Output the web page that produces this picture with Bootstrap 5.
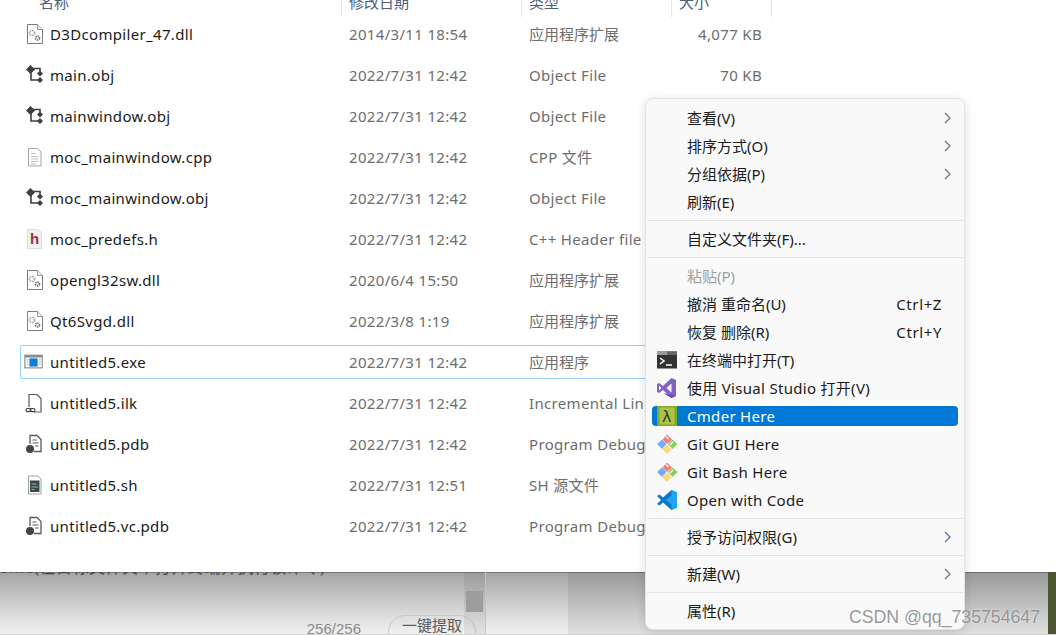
<!DOCTYPE html>
<html lang="zh-CN">
<head>
  <meta charset="UTF-8" />
  <meta name="viewport" content="width=device-width, initial-scale=1" />
  <title>File Explorer</title>
  <link href="https://cdn.jsdelivr.net/npm/bootstrap@5.3.3/dist/css/bootstrap.min.css" rel="stylesheet" />
  <style>
    html, body { height: 635px; overflow: hidden; }
    body { font-family: "Noto Sans", "Noto Sans CJK SC", sans-serif; font-size: 15px; position: relative; background: #fff; }

    .explorer { height: 572px; background: #fff; overflow: hidden; }
    .fgrid { display: grid; grid-template-columns: 322px 180px 150px 100px; margin-left: 20px; width: 752px; }
    .fhead { height: 17px; color: #4c607a; }
    .fhead > div { margin-top: -7px; padding: 0 0 0 7px; height: 24px; line-height: 18px; border-right: 1px solid #e5e5e5; }
    .fhead > div:first-child { padding-left: 19px; }
    .frow { height: 34px; margin-bottom: 7px; align-items: center; color: #6d6d6d; border: 1px solid transparent; border-radius: 2px; letter-spacing: .33px; }
    .frow > div { padding-left: 6px; white-space: nowrap; }
    .frow.picked { border-color: #99d1ff; }
    .frow > .zh { letter-spacing: 0; }
    .fname { display: flex; align-items: center; color: #1a1a1a; padding-left: 3px !important; }
    .fname svg { width: 20px; height: 22px; margin-right: 6px; flex: none; }
    .ftype { overflow: hidden; max-width: 122px; }
    .fsize { text-align: right; padding-right: 11px; }

    .backdrop { height: 63px; display: flex; color: #5a5a5a; background: linear-gradient(#a4a4a4, #dcdcdc 70%, #f1f1f1); border-bottom: 1px solid #d4d4d4; overflow: hidden; box-shadow: inset 0 1px 0 #777; }
    .bpane { width: 464px; flex: none; }
    .clipline { margin-top: -15px; font-size: 16px; line-height: 20px; white-space: nowrap; margin-left: -1px; color: #444; letter-spacing: .5px; }
    .bfoot { margin-top: 38px; justify-content: flex-end; gap: 27px; margin-right: -12px; }
    .counter { font-family: "Liberation Sans", sans-serif; font-size: 15px; color: #8a8a8a; padding-top: 3px; }
    .pillbtn { width: 88px; height: 34px; border: 1px solid #c8c8c8; border-radius: 17px; background: transparent; font-size: 15px; color: #5a5a5a; text-align: center; line-height: 19px; }
    .sbar { width: 22px; flex: none; background: rgba(0,0,0,.06); border-right: 1px solid #c4c4c4; padding: 19px 2px 0 2px; }
    .sthumb { width: 17px; height: 21px; background: #9d9d9d; }
    .bgap { width: 82px; flex: none; }
    .bside { flex: 1; background: rgba(0,0,0,.07); }
    .bphoto { width: 8px; flex: none; background: #4c5632; }

    .ctx.show { position: absolute; display: flex; flex-direction: column; left: 645px; top: 98px; width: 320px; height: 532px; margin: 0; padding: 5px 0 0; min-width: 0; background: #f9f9f9; border: 1px solid #e3e3e3; border-radius: 8px; font-size: 15px; color: #1a1a1a; box-shadow: 0 2px 10px rgba(0,0,0,.14); }
    .ctx .dropdown-item { display: flex; align-items: center; position: relative; height: 20px; margin: 4px 6px; width: auto; padding: 0 16px 0 35px; border-radius: 4px; color: #1a1a1a; line-height: 20px; white-space: nowrap; font-size: 15px; flex: none; }
    .ctx .dropdown-item.active { background: #0078d4; color: #fff; }
    .ctx .dropdown-item.disabled { color: #a0a0a0; }
    .ctx .dropdown-divider { margin: 4px 1px; border-top: 1px solid #e3e3e3; opacity: 1; flex: none; }
    .ctx .dropdown-item.latin { letter-spacing: .3px; }
    .mico { position: absolute; left: 4px; top: -1px; width: 22px; height: 22px; }
    .keyhint { margin-left: auto; letter-spacing: .6px; }
    .chev { margin-left: auto; margin-right: -9px; width: 7px; height: 12px; fill: none; stroke: #6b6b6b; stroke-width: 1.1; }
    .chev.tint { stroke: #3d6fb4; }

    .wmark { position: absolute; z-index: 1010; left: 849px; top: 604px; font-family: "Liberation Sans", sans-serif; font-size: 17.7px; color: rgba(125,125,125,.8); text-shadow: 0 0 2px rgba(255,255,255,.8); white-space: nowrap; }
  </style>
</head>
<body>

<svg width="0" height="0" class="position-absolute">
  <defs>
    <symbol id="i-dll" viewBox="0 0 20 22">
      <path d="M3.500 1.500h10l5 5v14h-15z" fill="#fff" stroke="#7b7b7b"/>
      <path d="M13.500 1.500v5h5" fill="#eee" stroke="#9a9a9a"/>
      <circle cx="8" cy="10" r="2.600" fill="none" stroke="#a4acb8" stroke-width="1.800" stroke-dasharray="1.600 .8"/>
      <circle cx="13.500" cy="15" r="2" fill="none" stroke="#6c6c6c" stroke-width="1.600" stroke-dasharray="1.400 .7"/>
    </symbol>
    <symbol id="i-obj" viewBox="0 0 20 22">
      <path d="M2 5.500l4.500-4.500 4.500 4.500-4.500 4.500z M13 9.500l3-3 3 3-3 3z M13 16l3-3 3 3-3 3z" fill="#3f3f3f"/>
      <path d="M8 4.500h8v3 M7 7.500v8.500h7" fill="none" stroke="#3f3f3f" stroke-width="1.600"/>
    </symbol>
    <symbol id="i-cpp" viewBox="0 0 20 22">
      <path d="M4.500 2.500h9l3.500 3.500v14h-12.500z" fill="#fff" stroke="#a2a2a2"/>
      <path d="M7 7.500h5M7 10.500h7.500M7 13h7.500M7 15.500h7.500M7 18h5" stroke="#c2c2c2"/>
    </symbol>
    <symbol id="i-h" viewBox="0 0 20 22">
      <path d="M3.500 1.500h11l3 3v16h-14z" fill="#f1f1f1" stroke="#dcdcdc"/>
      <text x="6" y="16" font-family="Liberation Sans, sans-serif" font-size="15" font-weight="700" fill="#a82a33">h</text>
    </symbol>
    <symbol id="i-exe" viewBox="0 0 22 20">
      <rect x="1" y="2.500" width="19" height="14" fill="#fff" stroke="#6f6f6f"/>
      <rect x="1" y="2.500" width="19" height="2.600" fill="#8a8a8a"/>
      <rect x="6" y="6" width="9" height="9" fill="#0f7fd6"/>
      <path d="M3 7.500h2M3 10h2M3 12.500h2M16.500 7.500h2M16.500 10h2M16.500 12.500h2" stroke="#a8a8a8"/>
    </symbol>
    <symbol id="i-ilk" viewBox="0 0 20 22">
      <path d="M5 15V2.500h8l4 4v13.500h-7" fill="#fff" stroke="#5a5a5a" stroke-width="1.200"/>
      <rect x="2" y="16.500" width="5" height="3.200" rx="1.600" fill="none" stroke="#444" stroke-width="1.200"/>
      <rect x="6" y="16.500" width="5" height="3.200" rx="1.600" fill="none" stroke="#444" stroke-width="1.200"/>
    </symbol>
    <symbol id="i-pdb" viewBox="0 0 20 22">
      <path d="M6 11V2.500h7l4 4v12h-7" fill="#fff" stroke="#5a5a5a" stroke-width="1.300"/>
      <path d="M8.500 7h4M8.500 10h6M11 13h3.500" stroke="#5a5a5a" stroke-width="1.200"/>
      <circle cx="6" cy="16" r="4" fill="#444"/>
    </symbol>
    <symbol id="i-sh" viewBox="0 0 20 22">
      <path d="M4.500 2h9.500l3 3v15h-12.500z" fill="#fff" stroke="#a0a0a0"/>
      <rect x="6" y="6.500" width="9.500" height="11.500" fill="#37474f"/>
      <path d="M7.500 10h5M7.500 13h6.500M7.500 15.500h3" stroke="#9fb0b8"/>
    </symbol>
    <symbol id="i-term" viewBox="0 0 22 22">
      <rect x="1" y="2.500" width="20" height="17" fill="#333"/>
      <rect x="1" y="2.500" width="10" height="3.500" fill="#9b9b9b"/>
      <rect x="11" y="2.500" width="10" height="3.500" fill="#666"/>
      <path d="M4 9l4 3-4 3" fill="none" stroke="#fff" stroke-width="1.500"/>
      <path d="M10 16h6" stroke="#fff" stroke-width="1.500"/>
    </symbol>
    <symbol id="i-vs" viewBox="0 0 22 22">
      <path d="M15.500 1L20 3v16l-4.500 2L7 13l-4 3-2-1V7l2-1 4 3zM15.500 6.500L10.500 11l5 4.500zM3 8.500v5l2.500-2.500z" fill="#8661c5" fill-rule="evenodd"/>
      <path d="M7 16l8.500 5L20 19z" fill="#6c46ae"/>
    </symbol>
    <symbol id="i-cmder" viewBox="0 0 22 22">
      <rect x="1" y="1" width="20" height="20" fill="#86a528"/>
      <rect x="3.500" y="2.500" width="15" height="17" fill="#a7c54a"/>
      <text x="11" y="17" text-anchor="middle" font-family="DejaVu Sans, sans-serif" font-size="16" fill="#39401d">λ</text>
    </symbol>
    <symbol id="i-git" viewBox="0 0 22 22">
      <path d="M11 1.500l5 5-5 4.500-4.500-4.500z" fill="#f08080"/>
      <path d="M6 6.500l4.500 4.500-4.500 5-5-5z" fill="#77aaf8"/>
      <path d="M16.500 6.500l5 4.500-5 5-4.500-5z" fill="#86cf5f"/>
      <path d="M11 11.500l4.500 4.500-4.500 5-5-5z" fill="#fcd975"/>
      <path d="M10 3.500l2.500 2.500M17 9l-3 3" stroke="#fff" stroke-width="1.200"/>
    </symbol>
    <symbol id="i-code" viewBox="0 0 22 22">
      <path d="M15.500 1L21 3.500v15L15.500 21 7 13.500l-3.500 3L1 15l4-4-4-4 2.500-1.500L7 8.500z" fill="#0a78c8"/>
      <path d="M15.500 1L21 3.500v15L15.500 21zM15.500 6.500L9.500 11l6 4.500z" fill="#22a5ee" fill-rule="evenodd"/>
    </symbol>
  </defs>
</svg>

<div class="explorer">
  <div class="fgrid fhead">
    <div>名称</div>
    <div>修改日期</div>
    <div>类型</div>
    <div>大小</div>
  </div>
  <div class="fgrid frow">
    <div class="fname"><svg><use href="#i-dll"/></svg>D3Dcompiler_47.dll</div>
    <div>2014/3/11 18:54</div><div class="ftype zh">应用程序扩展</div><div class="fsize">4,077 KB</div>
  </div>
  <div class="fgrid frow">
    <div class="fname"><svg><use href="#i-obj"/></svg>main.obj</div>
    <div>2022/7/31 12:42</div><div class="ftype">Object File</div><div class="fsize">70 KB</div>
  </div>
  <div class="fgrid frow">
    <div class="fname"><svg><use href="#i-obj"/></svg>mainwindow.obj</div>
    <div>2022/7/31 12:42</div><div class="ftype">Object File</div><div class="fsize"></div>
  </div>
  <div class="fgrid frow">
    <div class="fname"><svg><use href="#i-cpp"/></svg>moc_mainwindow.cpp</div>
    <div>2022/7/31 12:42</div><div class="ftype">CPP 文件</div><div class="fsize"></div>
  </div>
  <div class="fgrid frow">
    <div class="fname"><svg><use href="#i-obj"/></svg>moc_mainwindow.obj</div>
    <div>2022/7/31 12:42</div><div class="ftype">Object File</div><div class="fsize"></div>
  </div>
  <div class="fgrid frow">
    <div class="fname"><svg><use href="#i-h"/></svg>moc_predefs.h</div>
    <div>2022/7/31 12:42</div><div class="ftype">C++ Header file</div><div class="fsize"></div>
  </div>
  <div class="fgrid frow">
    <div class="fname"><svg><use href="#i-dll"/></svg>opengl32sw.dll</div>
    <div>2020/6/4 15:50</div><div class="ftype zh">应用程序扩展</div><div class="fsize"></div>
  </div>
  <div class="fgrid frow">
    <div class="fname"><svg><use href="#i-dll"/></svg>Qt6Svgd.dll</div>
    <div>2022/3/8 1:19</div><div class="ftype zh">应用程序扩展</div><div class="fsize"></div>
  </div>
  <div class="fgrid frow picked">
    <div class="fname"><svg><use href="#i-exe"/></svg>untitled5.exe</div>
    <div>2022/7/31 12:42</div><div class="ftype zh">应用程序</div><div class="fsize"></div>
  </div>
  <div class="fgrid frow">
    <div class="fname"><svg><use href="#i-ilk"/></svg>untitled5.ilk</div>
    <div>2022/7/31 12:42</div><div class="ftype">Incremental Link</div><div class="fsize"></div>
  </div>
  <div class="fgrid frow">
    <div class="fname"><svg><use href="#i-pdb"/></svg>untitled5.pdb</div>
    <div>2022/7/31 12:42</div><div class="ftype">Program Debug</div><div class="fsize"></div>
  </div>
  <div class="fgrid frow">
    <div class="fname"><svg><use href="#i-sh"/></svg>untitled5.sh</div>
    <div>2022/7/31 12:51</div><div class="ftype">SH 源文件</div><div class="fsize"></div>
  </div>
  <div class="fgrid frow">
    <div class="fname"><svg><use href="#i-pdb"/></svg>untitled5.vc.pdb</div>
    <div>2022/7/31 12:42</div><div class="ftype">Program Debug</div><div class="fsize"></div>
  </div>
</div>

<div class="backdrop">
  <div class="bpane">
    <div class="clipline">ome(在目标文件夹中打开终端并执行该命令)</div>
    <div class="bfoot d-flex">
      <span class="counter">256/256</span>
      <div class="pillbtn">一键提取</div>
    </div>
  </div>
  <div class="sbar"><div class="sthumb"></div></div>
  <div class="bgap"></div>
  <div class="bside"></div>
  <div class="bphoto"></div>
</div>

<div class="dropdown-menu show ctx">
  <a class="dropdown-item" href="#">查看(V)<svg class="chev" viewBox="0 0 7 12"><path d="M1 1l5 5-5 5"/></svg></a>
  <a class="dropdown-item" href="#">排序方式(O)<svg class="chev" viewBox="0 0 7 12"><path d="M1 1l5 5-5 5"/></svg></a>
  <a class="dropdown-item" href="#">分组依据(P)<svg class="chev" viewBox="0 0 7 12"><path d="M1 1l5 5-5 5"/></svg></a>
  <a class="dropdown-item" href="#">刷新(E)</a>
  <hr class="dropdown-divider">
  <a class="dropdown-item" href="#">自定义文件夹(F)...</a>
  <hr class="dropdown-divider">
  <a class="dropdown-item disabled" href="#">粘贴(P)</a>
  <a class="dropdown-item" href="#">撤消 重命名(U)<span class="keyhint">Ctrl+Z</span></a>
  <a class="dropdown-item" href="#">恢复 删除(R)<span class="keyhint">Ctrl+Y</span></a>
  <a class="dropdown-item" href="#"><svg class="mico"><use href="#i-term"/></svg>在终端中打开(T)</a>
  <a class="dropdown-item latin" href="#"><svg class="mico"><use href="#i-vs"/></svg>使用 Visual Studio 打开(V)</a>
  <a class="dropdown-item active latin" href="#"><svg class="mico"><use href="#i-cmder"/></svg>Cmder Here</a>
  <a class="dropdown-item latin" href="#"><svg class="mico"><use href="#i-git"/></svg>Git GUI Here</a>
  <a class="dropdown-item latin" href="#"><svg class="mico"><use href="#i-git"/></svg>Git Bash Here</a>
  <a class="dropdown-item latin" href="#"><svg class="mico"><use href="#i-code"/></svg>Open with Code</a>
  <hr class="dropdown-divider">
  <a class="dropdown-item" href="#">授予访问权限(G)<svg class="chev tint" viewBox="0 0 7 12"><path d="M1 1l5 5-5 5"/></svg></a>
  <hr class="dropdown-divider">
  <a class="dropdown-item" href="#">新建(W)<svg class="chev" viewBox="0 0 7 12"><path d="M1 1l5 5-5 5"/></svg></a>
  <hr class="dropdown-divider">
  <a class="dropdown-item" href="#">属性(R)</a>
</div>

<div class="wmark">CSDN @qq_735754647</div>

<script src="https://cdn.jsdelivr.net/npm/bootstrap@5.3.3/dist/js/bootstrap.bundle.min.js"></script>
</body>
</html>
